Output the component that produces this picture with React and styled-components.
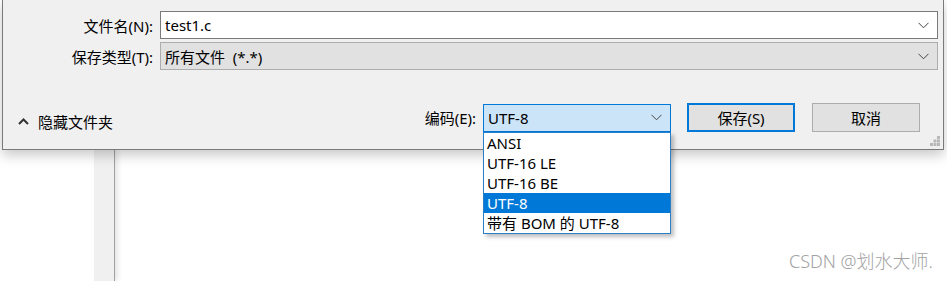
import React from 'react';
import styled, { createGlobalStyle } from 'styled-components';

const GlobalStyle = createGlobalStyle`
    html, body {
        margin: 0;
        padding: 0;
        background: #ffffff;
        overflow: hidden;
    }
    body {
        font-family: "Noto Sans", "Noto Sans CJK SC", sans-serif;
        font-size: 15px;
        color: #000;
    }
`

const Page = styled.div`
    position: relative;
    width: 947px;
    height: 281px;
    display: flex;
    flex-direction: column;
    background: #ffffff;
`
const Dialog = styled.div`
    position: relative;
    z-index: 2;
    margin-left: 2px;
    width: 942px;
    height: 150px;
    box-sizing: border-box;
    background: #f0f0f0;
    border: 1px solid #7a7a7a;
    border-top: none;
    box-shadow: 0 5px 12px rgba(0, 0, 0, 0.22);
    display: flex;
    flex-direction: column;
`
const Fields = styled.div`
    display: grid;
    grid-template-columns: 150px 778px;
    column-gap: 7px;
    row-gap: 3px;
    padding-top: 11px;
`
const Label = styled.label`
    display: flex;
    align-items: center;
    justify-content: flex-end;
    white-space: nowrap;
    height: 28px;
`
const Combo = styled.div`
    position: relative;
    height: 28px;
    box-sizing: border-box;
    display: flex;
    align-items: center;
    justify-content: space-between;
    padding: 0 8px 0 4px;
    background: ${p => p.$bg};
    border: 1px solid ${p => p.$border};
    white-space: nowrap;
`
const Footer = styled.div`
    display: flex;
    align-items: center;
    margin-top: 33px;
    padding-left: 15px;
    padding-right: 23px;
`
const Toggle = styled.div`
    display: flex;
    align-items: center;
    gap: 9px;
    margin-top: 8px;
`
const Spacer = styled.div`
    flex: 1;
`
const EncodingLabel = styled.span`
    margin-right: 7px;
    white-space: nowrap;
`
const EncodingWrap = styled.div`
    position: relative;
    width: 188px;
    margin-right: 16px;
`
const Button = styled.button`
    width: 108px;
    height: 29px;
    box-sizing: border-box;
    background: #e1e1e1;
    border: ${p => (p.$primary ? '2px solid #0078d7' : '1px solid #adadad')};
    font: inherit;
    color: #000;
    padding: 0;
    margin-left: ${p => p.$gap || 0}px;
`
const List = styled.ul`
    position: absolute;
    top: 100%;
    left: 0;
    width: 188px;
    margin: 0;
    padding: 0;
    list-style: none;
    box-sizing: border-box;
    background: #fff;
    border: 1px solid #2a7fc9;
    box-shadow: 3px 3px 4px rgba(0, 0, 0, 0.25);
`
const Item = styled.li`
    height: 20px;
    line-height: 20px;
    padding-left: 3px;
    white-space: nowrap;
    background: ${p => (p.$active ? '#0078d7' : 'transparent')};
    color: ${p => (p.$active ? '#fff' : '#000')};
`
const Grip = styled.svg`
    position: absolute;
    right: 3px;
    bottom: 3px;
`
const Below = styled.div`
    flex: 1;
    display: flex;
`
const Gap = styled.div`
    width: 94px;
`
const Strip = styled.div`
    width: 20px;
    background: #f0f0f0;
    border-right: 1px solid #a0a0a0;
    box-shadow: 3px 0 5px rgba(0, 0, 0, 0.1);
`
const Watermark = styled.div`
    position: absolute;
    right: 14px;
    bottom: 8px;
    font-size: 18px;
    font-weight: 300;
    color: #a2a2a2;
    text-shadow: 1px 1px 0 #fff;
    white-space: nowrap;
`

const ChevronDown = () => (
    <svg width="11" height="7" viewBox="0 0 11 7">
        <polyline points="0.5,0.8 5.5,5.8 10.5,0.8" fill="none" stroke="#444" strokeWidth="1" />
    </svg>
)

const ChevronUp = () => (
    <svg width="11" height="7" viewBox="0 0 11 7">
        <polyline points="1,6 5.5,1.5 10,6" fill="none" stroke="#333" strokeWidth="2" />
    </svg>
)

const encodings = ["ANSI", "UTF-16 LE", "UTF-16 BE", "UTF-8", "带有 BOM 的 UTF-8"];

const App = () => {
    return (
        <Page>
            <GlobalStyle />
            <Dialog>
                <Fields>
                    <Label>文件名(N):</Label>
                    <Combo $bg="#ffffff" $border="#7a7a7a">
                        <span>test1.c</span>
                        <ChevronDown />
                    </Combo>
                    <Label>保存类型(T):</Label>
                    <Combo $bg="#e1e1e1" $border="#adadad">
                        <span>所有文件&nbsp;&nbsp;(*.*)</span>
                        <ChevronDown />
                    </Combo>
                </Fields>
                <Footer>
                    <Toggle>
                        <ChevronUp />
                        <span>隐藏文件夹</span>
                    </Toggle>
                    <Spacer />
                    <EncodingLabel>编码(E):</EncodingLabel>
                    <EncodingWrap>
                        <Combo $bg="#cce4f7" $border="#0078d7">
                            <span>UTF-8</span>
                            <ChevronDown />
                        </Combo>
                        <List>
                            {encodings.map(e => (
                                <Item key={e} $active={e === "UTF-8"}>{e}</Item>
                            ))}
                        </List>
                    </EncodingWrap>
                    <Button $primary>保存(S)</Button>
                    <Button $gap={17}>取消</Button>
                </Footer>
                <Grip width="10" height="10" viewBox="0 0 10 10">
                    <g fill="#b8b8b8">
                        <rect x="7" y="0" width="3" height="3" />
                        <rect x="3.5" y="3.5" width="3" height="3" />
                        <rect x="7" y="3.5" width="3" height="3" />
                        <rect x="0" y="7" width="3" height="3" />
                        <rect x="3.5" y="7" width="3" height="3" />
                        <rect x="7" y="7" width="3" height="3" />
                    </g>
                </Grip>
            </Dialog>
            <Below>
                <Gap />
                <Strip />
            </Below>
            <Watermark>CSDN @划水大师.</Watermark>
        </Page>
    )
}

export default App;
